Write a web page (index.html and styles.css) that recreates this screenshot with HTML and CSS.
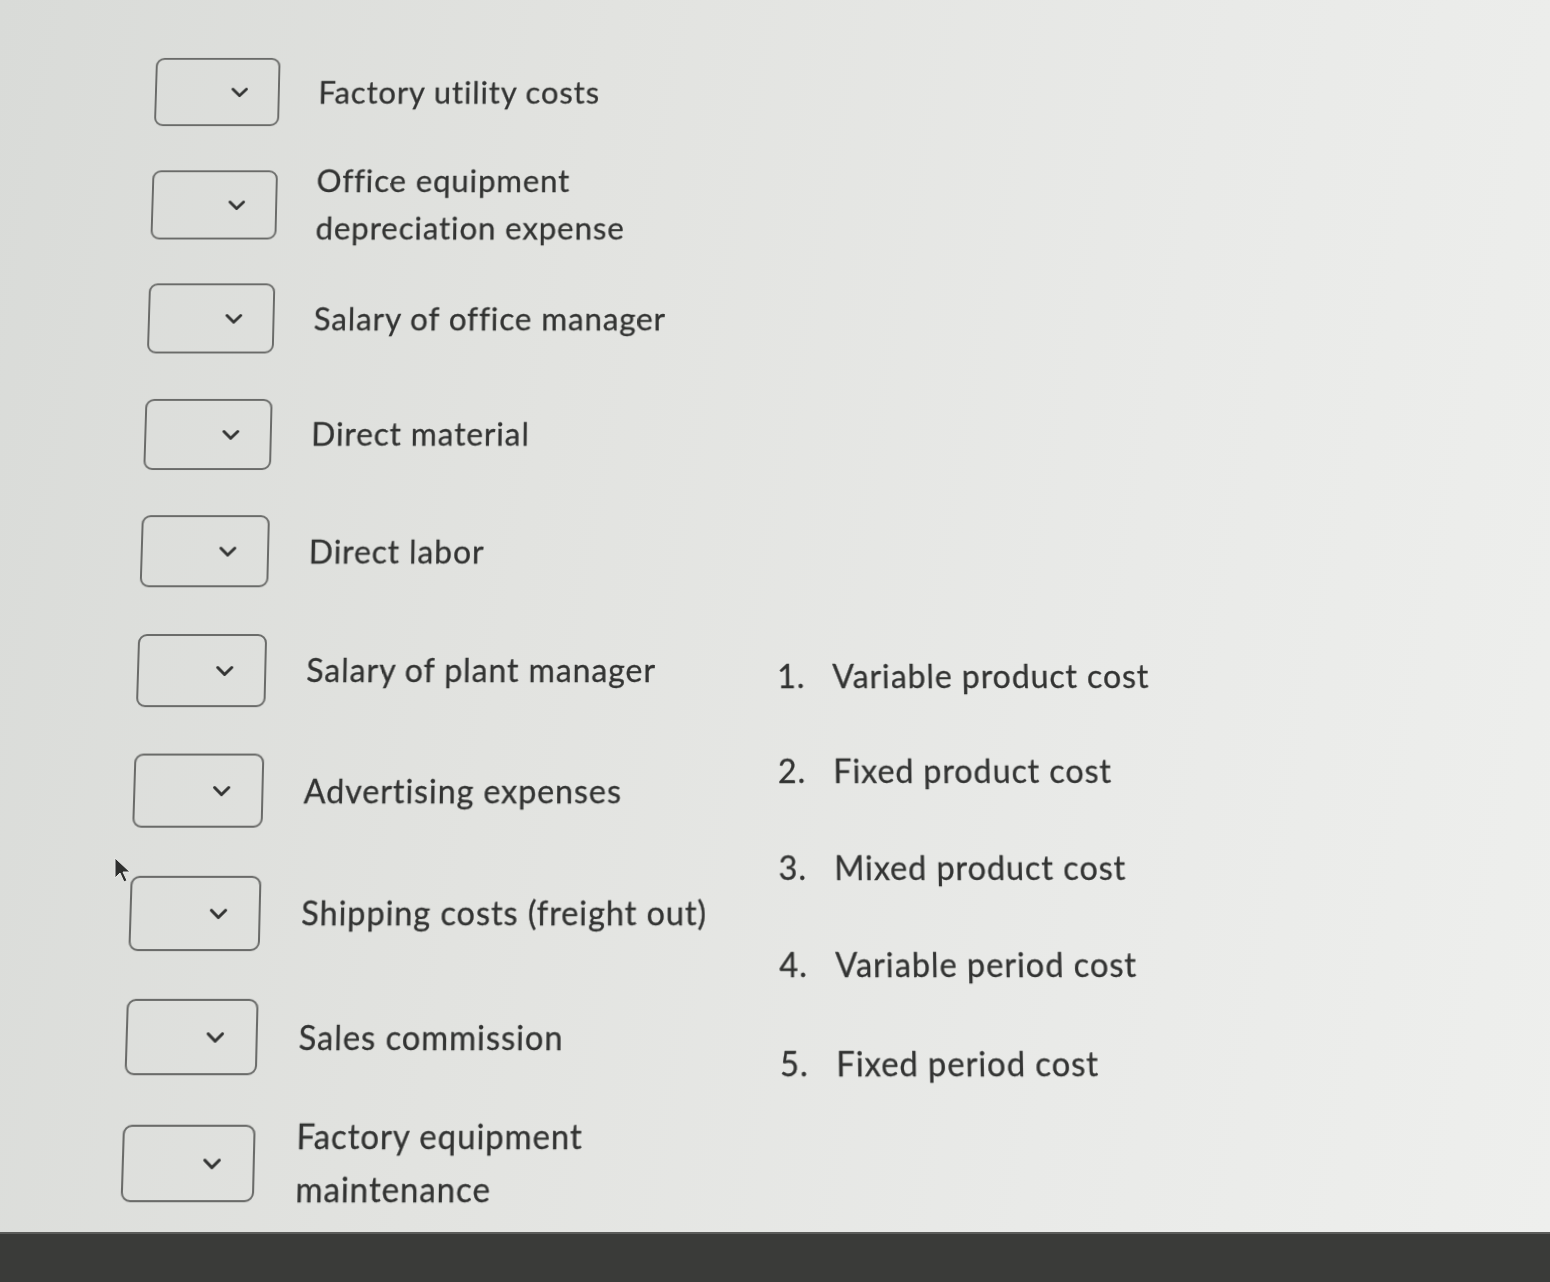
FILE: index.html
```html
<!DOCTYPE html>
<html>
<head>
<meta charset="UTF-8">
<title>Cost classification</title>
<link rel="stylesheet" href="styles.css">
</head>
<body>
<div class="screen">
<div class="page">
<div class="left">
<div class="row"><div class="select"><svg class="chev" viewBox="0 0 19 12"><path d="M2.5 2.5l7 7 7-7"/></svg></div><div class="label">Factory utility costs</div></div>
<div class="row"><div class="select"><svg class="chev" viewBox="0 0 19 12"><path d="M2.5 2.5l7 7 7-7"/></svg></div><div class="label">Office equipment<br>depreciation expense</div></div>
<div class="row"><div class="select"><svg class="chev" viewBox="0 0 19 12"><path d="M2.5 2.5l7 7 7-7"/></svg></div><div class="label">Salary of office manager</div></div>
<div class="row"><div class="select"><svg class="chev" viewBox="0 0 19 12"><path d="M2.5 2.5l7 7 7-7"/></svg></div><div class="label">Direct material</div></div>
<div class="row"><div class="select"><svg class="chev" viewBox="0 0 19 12"><path d="M2.5 2.5l7 7 7-7"/></svg></div><div class="label">Direct labor</div></div>
<div class="row"><div class="select"><svg class="chev" viewBox="0 0 19 12"><path d="M2.5 2.5l7 7 7-7"/></svg></div><div class="label">Salary of plant manager</div></div>
<div class="row"><div class="select"><svg class="chev" viewBox="0 0 19 12"><path d="M2.5 2.5l7 7 7-7"/></svg></div><div class="label">Advertising expenses</div></div>
<div class="row"><div class="select"><svg class="chev" viewBox="0 0 19 12"><path d="M2.5 2.5l7 7 7-7"/></svg></div><div class="label">Shipping costs (freight out)</div></div>
<div class="row"><div class="select"><svg class="chev" viewBox="0 0 19 12"><path d="M2.5 2.5l7 7 7-7"/></svg></div><div class="label">Sales commission</div></div>
<div class="row"><div class="select"><svg class="chev" viewBox="0 0 19 12"><path d="M2.5 2.5l7 7 7-7"/></svg></div><div class="label">Factory equipment<br>maintenance</div></div>
</div>
<ol class="choices">
<li><span class="num">1.</span>Variable product cost</li>
<li><span class="num">2.</span>Fixed product cost</li>
<li><span class="num">3.</span>Mixed product cost</li>
<li><span class="num">4.</span>Variable period cost</li>
<li><span class="num">5.</span>Fixed period cost</li>
</ol>
</div>
<svg class="cursor" viewBox="0 0 16 26"><path d="M1 1v20l5-5 4 9 3-1.5-4-8.5h7z"/></svg>
</div>
<div class="bezel"></div>
</body>
</html>
```

FILE: styles.css
```css
html,body{
margin:0;
padding:0;
}
body{
background:#3a3b39;
font-family:Lato,"Open Sans",sans-serif;
font-variant-ligatures:none;
color:#323332;
-webkit-text-stroke:0.3px #323332;
}
.screen{
position:relative;
height:1232px;
overflow:hidden;
background:linear-gradient(100deg,#d9dbd8 0%,#e2e3e0 35%,#e9eae8 70%,#eeefed 100%);
}
/* the photo is taken at a slight angle */
.page{
display:flex;
height:1232px;
transform-origin:660px 640px;
transform:perspective(1000px) rotateX(3.4deg);
}
.left{
width:777px;
box-sizing:border-box;
padding:13px 0 0 138px;
}
.row{
display:flex;
align-items:center;
height:119.5px;
}
.select{
position:relative;
flex:none;
width:129px;
height:73px;
box-sizing:border-box;
border:2px solid #6a6b69;
border-radius:9px;
}
.chev{
position:absolute;
right:30px;
top:29px;
width:19px;
height:12px;
fill:none;
stroke:#333433;
stroke-width:3;
stroke-linecap:round;
stroke-linejoin:round;
}
.label{
margin-left:40px;
font-size:32px;
letter-spacing:0.9px;
line-height:50px;
}
.choices{
list-style:none;
margin:628px 0 0;
padding:0;
font-size:32px;
letter-spacing:0.9px;
}
.choices li{
display:flex;
align-items:center;
height:94.5px;
}
.num{
width:55px;
}
.cursor{
position:absolute;
left:114px;
top:857px;
width:16px;
height:26px;
fill:#2e2f2e;
stroke:#e8e9e7;
stroke-width:1;
}
.bezel{
height:50px;
background:#3a3b39;
border-top:2px solid #5b5c5a;
}
```
